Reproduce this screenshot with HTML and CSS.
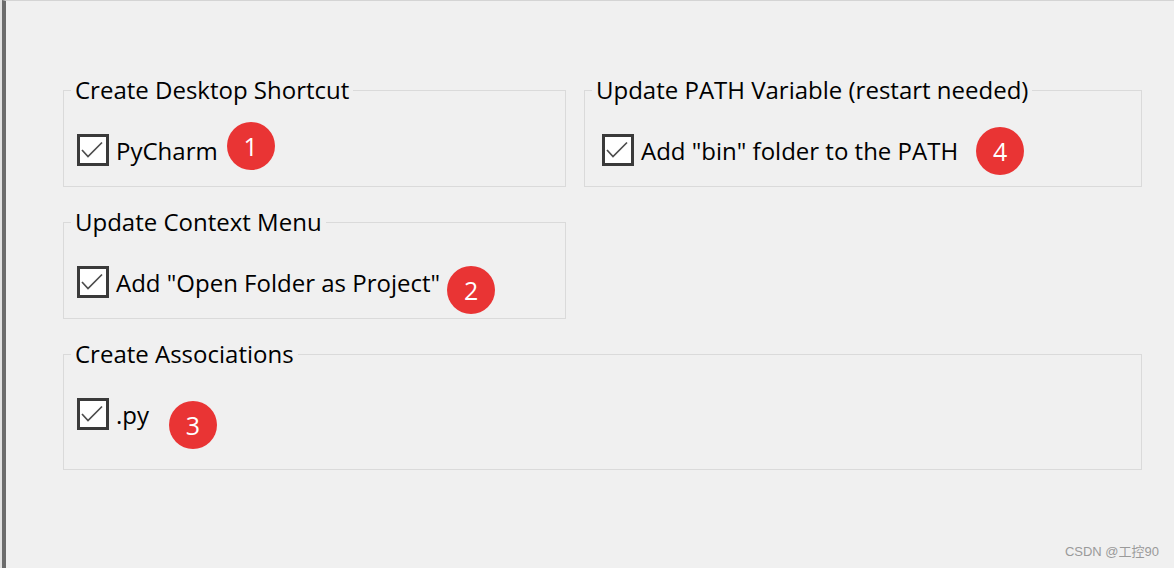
FILE: index.html
```html
<!DOCTYPE html>
<html lang="en">
<head>
    <meta charset="UTF-8" />
    <title>Installation Options</title>
    <link rel="stylesheet" href="styles.css">
</head>
<body>
    <div class="window">
        <div class="options">
            <fieldset class="group">
                <legend>Create Desktop Shortcut</legend>
                <div class="row">
                    <label class="check">
                        <span class="box"><svg viewBox="0 0 26 26"><path d="M2 13 L8 19.5 L22 5.5" /></svg></span>
                        <span>PyCharm</span>
                    </label>
                    <span class="badge badge-1">1</span>
                </div>
            </fieldset>

            <fieldset class="group right">
                <legend>Update PATH Variable (restart needed)</legend>
                <div class="row">
                    <label class="check">
                        <span class="box"><svg viewBox="0 0 26 26"><path d="M2 13 L8 19.5 L22 5.5" /></svg></span>
                        <span>Add "bin" folder to the PATH</span>
                    </label>
                    <span class="badge badge-4">4</span>
                </div>
            </fieldset>

            <fieldset class="group">
                <legend>Update Context Menu</legend>
                <div class="row">
                    <label class="check">
                        <span class="box"><svg viewBox="0 0 26 26"><path d="M2 13 L8 19.5 L22 5.5" /></svg></span>
                        <span>Add "Open Folder as Project"</span>
                    </label>
                    <span class="badge badge-2">2</span>
                </div>
            </fieldset>

            <!-- empty cell on the right of row 2 -->
            <div></div>

            <fieldset class="group wide">
                <legend>Create Associations</legend>
                <div class="row">
                    <label class="check">
                        <span class="box"><svg viewBox="0 0 26 26"><path d="M2 13 L8 19.5 L22 5.5" /></svg></span>
                        <span>.py</span>
                    </label>
                    <span class="badge badge-3">3</span>
                </div>
            </fieldset>
        </div>

        <div class="watermark">CSDN @工控90</div>
    </div>
</body>
</html>
```

FILE: styles.css
```css
html, body {
    margin: 0;
    padding: 0;
    background: #f0f0f0;
}

body {
    font-family: "Open Sans", "Noto Sans", sans-serif;
    color: #000;
    border-left: 2px solid #e2e2e2;
}

.window {
    position: relative;
    box-sizing: border-box;
    height: 568px;
    border-left: 4px solid #6c6c6c;
    border-top: 1px solid #d4d4d4;
    padding: 74px 32px 0 57px;
}

.options {
    display: grid;
    grid-template-columns: 503px 1fr;
    column-gap: 18px;
    row-gap: 20px;
}

.group {
    margin: 0;
    min-width: 0;
    border: 1px solid #dadada;
    padding: 29px 13px 20px 13px;
}

    .group.right {
        padding-left: 17px;
    }

    .group.wide {
        grid-column: 1 / 3;
        padding-bottom: 39px;
    }

    .group legend {
        font-size: 24px;
        line-height: 30px;
        padding: 0 4px;
        margin-left: -6px;
    }

    .group.right legend {
        margin-left: -10px;
    }

.row {
    display: flex;
    align-items: center;
    height: 32px;
}

.check {
    display: flex;
    align-items: center;
    gap: 7px;
    font-size: 24px;
}

.box {
    box-sizing: border-box;
    width: 32px;
    height: 32px;
    border: 3px solid #3a3a3a;
    background: #fff;
    display: flex;
}

    .box svg {
        width: 26px;
        height: 26px;
    }

    .box path {
        fill: none;
        stroke: #4d4d4d;
        stroke-width: 1.7;
    }

/* red numbered annotations */
.badge {
    position: relative;
    flex: none;
    width: 48px;
    height: 48px;
    border-radius: 50%;
    background: #e93434;
    color: #fff;
    font-size: 25px;
    line-height: 48px;
    text-align: center;
}

.badge-1 { margin-left: 9px; top: -4px; }
.badge-2 { margin-left: 7px; top: 8px; }
.badge-3 { margin-left: 20px; top: 11px; }
.badge-4 { margin-left: 18px; top: 1px; }

.watermark {
    position: absolute;
    right: 15px;
    bottom: 8px;
    font-family: "Liberation Sans", "Noto Sans CJK SC", sans-serif;
    font-size: 13px;
    color: #9a9a9a;
}
```
